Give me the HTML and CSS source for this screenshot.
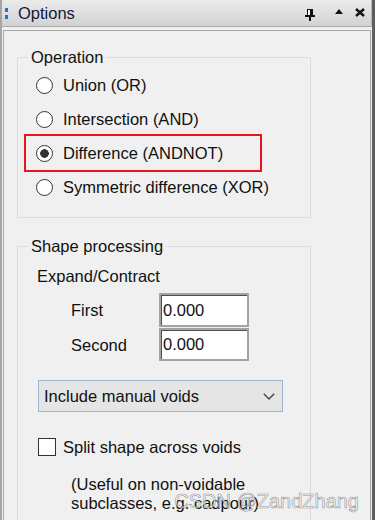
FILE: index.html
```html
<!DOCTYPE html>
<html lang="en">
<head>
    <meta charset="UTF-8">
    <meta name="viewport" content="width=device-width, initial-scale=1.0">
    <title>Options</title>
    <link rel="stylesheet" href="styles.css">
</head>
<body>
    <div class="dock">
        <div class="titlebar">
            <span class="grip"><i></i><i></i></span>
            <span class="title">Options</span>
            <span class="tools">
                <svg class="pin" width="10" height="12" viewBox="0 0 10 12">
                    <rect x="2.5" y="0.5" width="5" height="6" fill="#fff" stroke="#111"/>
                    <rect x="5" y="1" width="2" height="5" fill="#111"/>
                    <rect x="0" y="6" width="10" height="2" fill="#111"/>
                    <rect x="4" y="8" width="2" height="4" fill="#111"/>
                </svg>
                <svg class="up" width="8" height="5" viewBox="0 0 8 5">
                    <polygon points="0,5 8,5 4,0" fill="#111"/>
                </svg>
                <svg class="close" width="10" height="9" viewBox="0 0 10 9">
                    <path d="M1 1 L9 8 M9 1 L1 8" stroke="#111" stroke-width="2.4"/>
                </svg>
            </span>
        </div>

        <div class="pane">
            <fieldset class="group op">
                <legend>Operation</legend>
                <label class="opt"><input type="radio" name="op"> Union (OR)</label>
                <label class="opt"><input type="radio" name="op"> Intersection (AND)</label>
                <label class="opt marked"><input type="radio" name="op" checked> Difference (ANDNOT)</label>
                <label class="opt"><input type="radio" name="op"> Symmetric difference (XOR)</label>
            </fieldset>

            <fieldset class="group shape">
                <legend>Shape processing</legend>
                <div class="inner">
                    <div class="sub">Expand/Contract</div>
                    <div class="fields">
                        <label>First</label>
                        <input type="text" value="0.000">
                        <label>Second</label>
                        <input type="text" value="0.000">
                    </div>
                    <div class="combo">
                        <select>
                            <option>Include manual voids</option>
                        </select>
                        <svg class="chev" width="12" height="7" viewBox="0 0 12 7">
                            <path d="M0.8 0.8 L6 6 L11.2 0.8" fill="none" stroke="#444" stroke-width="1.4"/>
                        </svg>
                    </div>
                    <label class="check"><input type="checkbox"> Split shape across voids</label>
                    <div class="note">(Useful on non-voidable<br>subclasses, e.g. cadpour)</div>
                </div>
            </fieldset>
        </div>

        <div class="watermark">CSDN @ZandZhang</div>
    </div>
</body>
</html>
```

FILE: styles.css
```css
body {
    margin: 0;
    padding: 0;
    background-color: #f0f0f0;
    font-family: "Liberation Sans", Arial, sans-serif;
    font-size: 16.5px;
    line-height: 20px;
    color: #111;
}
.dock {
    position: relative;
    width: 375px;
    height: 520px;
    box-sizing: border-box;
    border-left: 2px solid #a6a6a6;
    border-right: 3px solid #5e5e5e;
    overflow: hidden;
}
.titlebar {
    display: flex;
    align-items: center;
    height: 27px;
    box-sizing: border-box;
    background: linear-gradient(#ebebeb, #d2d2d2);
    border-bottom: 1px solid #ababab;
    border-right: 1px solid #b8b8b8;
    padding-left: 3px;
}
.grip {
    display: flex;
    flex-direction: column;
    gap: 3px;
    margin-right: 10px;
}
.grip i {
    display: block;
    width: 3px;
    height: 4px;
    background: #1f72e0;
}
.title {
    color: #14183a;
}
.tools {
    margin-left: auto;
    display: flex;
    align-items: center;
    margin-right: 6px;
}
.pin {
    margin-top: 4px;
}
.up {
    margin-left: 20px;
    margin-top: -3px;
}
.close {
    margin-left: 12px;
    margin-top: -2px;
}
.pane {
    margin: 3px 1px 0 1px;
    height: 600px;
    border: 1px solid #a8a8a8;
    padding: 16px 0 0 13px;
}
.group {
    width: 294px;
    box-sizing: border-box;
    margin: 0;
    border: 1px solid #dcdcdc;
    padding: 0;
}
.group legend {
    margin-left: 10px;
    padding: 0 3px;
}
.op {
    padding: 1px 0 13px 0;
}
.opt {
    display: flex;
    align-items: center;
    height: 34px;
    padding-left: 18px;
    gap: 10px;
    white-space: nowrap;
}
.opt.marked {
    margin-left: 8px;
    padding-left: 10px;
    width: 234px;
    box-sizing: border-box;
    outline: 2px solid #e8131c;
}
.opt input {
    appearance: none;
    margin: 0;
    width: 17px;
    height: 17px;
    border: 1.5px solid #333;
    border-radius: 50%;
    background: #fff;
}
.opt input:checked {
    background: radial-gradient(circle, #333 0 4px, #fff 4.6px);
}
.shape {
    margin-top: 18px;
    height: 400px;
}
.inner {
    padding: 10px 0 0 19px;
}
.fields {
    display: grid;
    grid-template-columns: 88px 90px;
    row-gap: 1px;
    align-items: center;
    margin: 7px 0 0 34px;
}
.fields input {
    height: 34px;
    box-sizing: border-box;
    border: 2px solid #a3a3a3;
    box-shadow: inset 1px 1px 0 #4f4f4f;
    padding: 0 0 0 2px;
    font: inherit;
    color: #111;
    background: #fff;
    outline: none;
}
.fields input:last-child {
    height: 33px;
}
.combo {
    position: relative;
    width: 245px;
    margin: 19px 0 0 1px;
}
.combo select {
    appearance: none;
    width: 245px;
    height: 32px;
    border: 1px solid #9cb4cf;
    background: #e5e5e5;
    font: inherit;
    color: #111;
    padding: 0 0 0 5px;
    margin: 0;
    outline: none;
}
.chev {
    position: absolute;
    right: 8px;
    top: 13px;
}
.check {
    display: flex;
    align-items: center;
    gap: 7px;
    margin: 25px 0 0 1px;
}
.check input {
    appearance: none;
    margin: 0;
    width: 18px;
    height: 18px;
    border: 1px solid #333;
    background: #fff;
}
.note {
    margin: 18px 0 0 34px;
    line-height: 19px;
}
.watermark {
    position: absolute;
    right: 13px;
    top: 491px;
    font-size: 20px;
    color: rgba(255, 255, 255, 0.6);
    -webkit-text-stroke: 0.6px rgba(110, 110, 110, 0.75);
    white-space: nowrap;
}
```
